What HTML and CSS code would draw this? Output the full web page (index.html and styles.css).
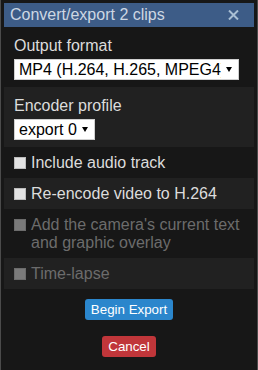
FILE: index.html
```html
<!DOCTYPE html>
<html lang="en">
<head>
  <meta charset="UTF-8">
  <meta name="viewport" content="width=device-width, initial-scale=1.0">
  <title>Convert/export</title>
  <link rel="stylesheet" href="styles.css">
</head>
<body>
  <div class="frame">
    <div class="dialog-header">
      <span class="dialog-title">Convert/export 2 clips</span>
      <svg class="close-icon" width="11" height="10" viewBox="0 0 11 10">
        <path d="M1 0.5 L10 9.5 M10 0.5 L1 9.5" stroke="#a9bfd4" stroke-width="2" fill="none"/>
      </svg>
    </div>

    <div class="field">
      <label for="format">Output format</label>
      <div class="select-wrap">
        <select id="format" class="select-format">
          <option>MP4 (H.264, H.265, MPEG4)</option>
        </select>
        <span class="select-arrow"></span>
      </div>
    </div>

    <div class="field alt">
      <label for="profile">Encoder profile</label>
      <div class="select-wrap">
        <select id="profile" class="select-profile">
          <option>export 0</option>
        </select>
        <span class="select-arrow"></span>
      </div>
    </div>

    <label class="check-row">
      <input type="checkbox">
      <span>Include audio track</span>
    </label>
    <label class="check-row alt">
      <input type="checkbox">
      <span>Re-encode video to H.264</span>
    </label>
    <label class="check-row disabled">
      <input type="checkbox" disabled>
      <span>Add the camera's current text and graphic overlay</span>
    </label>
    <label class="check-row alt disabled">
      <input type="checkbox" disabled>
      <span>Time-lapse</span>
    </label>

    <div class="actions">
      <button class="btn btn-primary">Begin Export</button>
      <button class="btn btn-danger">Cancel</button>
    </div>
  </div>
</body>
</html>
```

FILE: styles.css
```css
body {
  margin: 0;
  background-color: #171717;
  font-family: "Liberation Sans", Arial, sans-serif;
  font-size: 16px;
  color: #dcdcdc;
}

.frame {
  box-sizing: border-box;
  min-height: 370px;
  padding: 3px 3px 0;
  border-left: 1px solid #4b4b4b;
  border-right: 1px solid #4b4b4b;
}

.dialog-header {
  display: flex;
  align-items: center;
  justify-content: space-between;
  height: 24px;
  padding: 0 15px 0 6px;
  background-color: #3d5c87;
}

.dialog-title {
  color: #cdd7e3;
  line-height: 24px;
}

.close-icon {
  display: block;
}

.field {
  padding: 10px 10px 7px;
}

.field label {
  display: block;
  line-height: 18px;
  margin-bottom: 4px;
}

.alt {
  background-color: #212121;
}

.select-wrap {
  position: relative;
  display: inline-block;
}

.select-wrap select {
  display: block;
  height: 21px;
  margin: 0;
  padding: 0 17px 0 4px;
  border: 1px solid #d0d0d0;
  border-radius: 0;
  background-color: #fff;
  color: #000;
  font-family: "Liberation Sans", Arial, sans-serif;
  font-size: 16px;
  -webkit-appearance: none;
  appearance: none;
}

.select-format {
  width: 225px;
}

.select-profile {
  width: 81px;
}

.select-arrow {
  position: absolute;
  right: 7px;
  top: 8px;
  width: 0;
  height: 0;
  border-left: 3px solid transparent;
  border-right: 3px solid transparent;
  border-top: 5px solid #000;
  pointer-events: none;
}

.check-row {
  display: flex;
  align-items: flex-start;
  padding: 7px 10px 6px;
  line-height: 18px;
}

.check-row input {
  flex: none;
  width: 12px;
  height: 12px;
  margin: 3px 5px 0 0;
  border: 1px solid #bcbcbc;
  background-color: #e2e2e2;
  -webkit-appearance: none;
  appearance: none;
}

.check-row.disabled {
  color: #6c6c6c;
}

.check-row.disabled input {
  border-color: #6c6c6c;
  background-color: #7a7a7a;
}

.actions {
  display: flex;
  flex-direction: column;
  align-items: center;
  gap: 16px;
  padding-top: 10px;
}

.btn {
  height: 21px;
  padding: 0 6px;
  border: none;
  border-radius: 3px;
  color: #fff;
  font-family: "Liberation Sans", Arial, sans-serif;
  font-size: 13.33px;
  line-height: 21px;
  cursor: pointer;
}

.btn-primary {
  background-color: #2b86cc;
}

.btn-danger {
  background-color: #c0363a;
}
```
